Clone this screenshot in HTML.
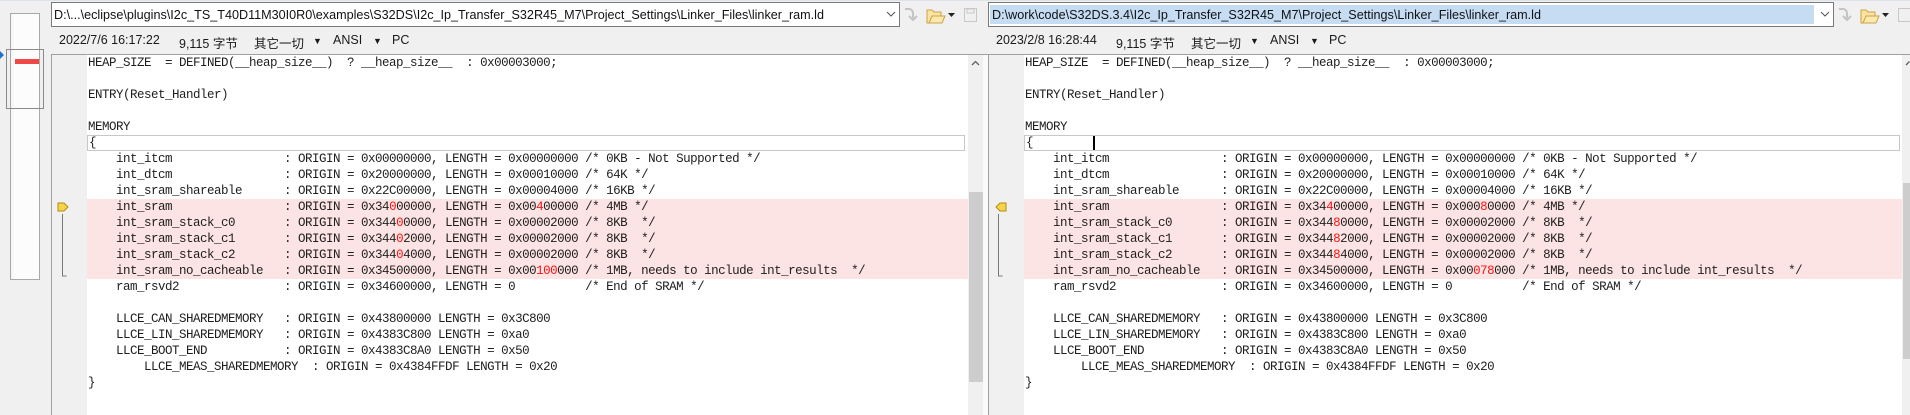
<!DOCTYPE html>
<html><head><meta charset="utf-8">
<style>
*{margin:0;padding:0;box-sizing:border-box}
body{width:1910px;height:415px;overflow:hidden;background:#f0f0f0;position:relative;font-family:"Liberation Sans","Noto Sans CJK SC",sans-serif}
.a{position:absolute}
.code{position:absolute;top:55px;background:#fff;height:360px;overflow:hidden}
.ln{position:absolute;left:0;right:0;height:16px;font:12.5px/16px "Liberation Mono",monospace;letter-spacing:-0.5px;color:#1e1e1e;white-space:pre;padding-left:1px}
.pk{background:#fde4e4}
.r{color:#ff1010}
.info{position:absolute;top:33px;font-size:12.5px;color:#1a1a1a;white-space:nowrap}
</style></head><body>

<!-- overview -->
<div class="a" style="left:10px;top:13px;width:30px;height:267px;border:1px solid #a8a8a8;background:#f7f7f7"></div>
<div class="a" style="left:14px;top:14px;width:25px;height:265px;background:#fcfcfc"></div>
<div class="a" style="left:6px;top:49px;width:38px;height:60px;border:1px solid #8a8a8a"></div>
<div class="a" style="left:15px;top:59px;width:24px;height:5px;background:#f04848"></div>
<div class="a" style="left:0;top:51px;width:0;height:0;border-top:4px solid transparent;border-bottom:4px solid transparent;border-left:4px solid #1b74d4"></div>
<div class="a" style="left:51px;top:54px;width:1px;height:361px;background:#a0a0a0"></div>

<!-- header -->
<div class="a" style="left:0;top:0;width:1910px;height:1px;background:#dfe3ea"></div>
<svg class="a" style="left:0;top:0" width="1910" height="55">
 <rect x="51.5" y="2.5" width="848" height="24" fill="#fff" stroke="#7a7a7a"/>
 <text x="54" y="19" font-family="Liberation Sans" font-size="13" fill="#111" textLength="770" lengthAdjust="spacingAndGlyphs">D:\...\eclipse\plugins\I2c_TS_T40D11M30I0R0\examples\S32DS\I2c_Ip_Transfer_S32R45_M7\Project_Settings\Linker_Files\linker_ram.ld</text>
 <path d="M887 12 l4 4 l4 -4" stroke="#555" fill="none"/>
 <path d="M905 9 h4 a4 4 0 0 1 4 4 v5 M909 16 l4 4 l4 -4" stroke="#c4c4c4" stroke-width="2" fill="none"/>
 <path d="M927 10 h5 l2 2 h7 v11 h-14z" fill="#fbe3a0" stroke="#c9a34a"/>
 <path d="M929 23 l3 -7 h13 l-3 7z" fill="#fde9ad" stroke="#c9a34a"/>
 <path d="M948 13 h7 l-3.5 4z" fill="#222"/>
 <rect x="964.5" y="8.5" width="12" height="13" fill="none" stroke="#c8c8c8"/>
 <rect x="967" y="9" width="7" height="4" fill="none" stroke="#c8c8c8"/>
 <rect x="988.5" y="2.5" width="845" height="24" fill="#fff" stroke="#7a7a7a"/>
 <rect x="990" y="5" width="824" height="19" fill="#c5dcf3"/>
 <text x="992" y="19" font-family="Liberation Sans" font-size="13" fill="#111" textLength="549" lengthAdjust="spacingAndGlyphs">D:\work\code\S32DS.3.4\I2c_Ip_Transfer_S32R45_M7\Project_Settings\Linker_Files\linker_ram.ld</text>
 <path d="M1821 12 l4 4 l4 -4" stroke="#555" fill="none"/>
 <path d="M1839 9 h4 a4 4 0 0 1 4 4 v5 M1843 16 l4 4 l4 -4" stroke="#c4c4c4" stroke-width="2" fill="none"/>
 <path d="M1861 10 h5 l2 2 h7 v11 h-14z" fill="#fbe3a0" stroke="#c9a34a"/>
 <path d="M1863 23 l3 -7 h13 l-3 7z" fill="#fde9ad" stroke="#c9a34a"/>
 <path d="M1882 13 h7 l-3.5 4z" fill="#222"/>
 <rect x="1898.5" y="8.5" width="12" height="13" fill="none" stroke="#c8c8c8"/>
 <line x1="51" y1="54.5" x2="1910" y2="54.5" stroke="#a0a0a0"/>
</svg>

<div class="info" style="left:59px">2022/7/6 16:17:22</div>
<div class="info" style="left:179px">9,115 字节</div>
<div class="info" style="left:254px">其它一切</div>
<div class="info" style="left:313px;font-size:9px;top:36px">▼</div>
<div class="info" style="left:333px">ANSI</div>
<div class="info" style="left:373px;font-size:9px;top:36px">▼</div>
<div class="info" style="left:392px">PC</div>

<div class="info" style="left:996px">2023/2/8 16:28:44</div>
<div class="info" style="left:1116px">9,115 字节</div>
<div class="info" style="left:1191px">其它一切</div>
<div class="info" style="left:1250px;font-size:9px;top:36px">▼</div>
<div class="info" style="left:1270px">ANSI</div>
<div class="info" style="left:1310px;font-size:9px;top:36px">▼</div>
<div class="info" style="left:1329px">PC</div>

<!-- left gutter -->
<svg class="a" style="left:52px;top:55px" width="35" height="360">
 <path d="M6 148 h6 l4 4 l-4 4 h-6z" fill="#f5d34a" stroke="#b58d10"/>
 <path d="M10.5 159 v62 h4" stroke="#777" fill="none"/>
</svg>

<!-- left code -->
<div class="code" style="left:87px;width:881px">
 <div class="ln" style="top:0">HEAP_SIZE  = DEFINED(__heap_size__)  ? __heap_size__  : 0x00003000;</div>
 <div class="ln" style="top:32px">ENTRY(Reset_Handler)</div>
 <div class="ln" style="top:64px">MEMORY</div>
 <div class="ln" style="top:80px;border:1px solid #c8c8c8;right:3px;line-height:14px">{</div>
 <div class="ln" style="top:96px">    int_itcm                : ORIGIN = 0x00000000, LENGTH = 0x00000000 /* 0KB - Not Supported */</div>
 <div class="ln" style="top:112px">    int_dtcm                : ORIGIN = 0x20000000, LENGTH = 0x00010000 /* 64K */</div>
 <div class="ln" style="top:128px">    int_sram_shareable      : ORIGIN = 0x22C00000, LENGTH = 0x00004000 /* 16KB */</div>
 <div class="ln pk" style="top:144px">    int_sram                : ORIGIN = 0x34<span class="r">0</span>00000, LENGTH = 0x00<span class="r">4</span>00000 /* 4MB */</div>
 <div class="ln pk" style="top:160px">    int_sram_stack_c0       : ORIGIN = 0x344<span class="r">0</span>0000, LENGTH = 0x00002000 /* 8KB  */</div>
 <div class="ln pk" style="top:176px">    int_sram_stack_c1       : ORIGIN = 0x344<span class="r">0</span>2000, LENGTH = 0x00002000 /* 8KB  */</div>
 <div class="ln pk" style="top:192px">    int_sram_stack_c2       : ORIGIN = 0x344<span class="r">0</span>4000, LENGTH = 0x00002000 /* 8KB  */</div>
 <div class="ln pk" style="top:208px">    int_sram_no_cacheable   : ORIGIN = 0x34500000, LENGTH = 0x00<span class="r">100</span>000 /* 1MB, needs to include int_results  */</div>
 <div class="ln" style="top:224px">    ram_rsvd2               : ORIGIN = 0x34600000, LENGTH = 0          /* End of SRAM */</div>
 <div class="ln" style="top:256px">    LLCE_CAN_SHAREDMEMORY   : ORIGIN = 0x43800000 LENGTH = 0x3C800</div>
 <div class="ln" style="top:272px">    LLCE_LIN_SHAREDMEMORY   : ORIGIN = 0x4383C800 LENGTH = 0xa0</div>
 <div class="ln" style="top:288px">    LLCE_BOOT_END           : ORIGIN = 0x4383C8A0 LENGTH = 0x50</div>
 <div class="ln" style="top:304px">        LLCE_MEAS_SHAREDMEMORY  : ORIGIN = 0x4384FFDF LENGTH = 0x20</div>
 <div class="ln" style="top:320px">}</div>
</div>
<!-- left scrollbar -->
<div class="a" style="left:968px;top:55px;width:15px;height:360px;background:#f0f0f0"></div>
<div class="a" style="left:969px;top:192px;width:14px;height:190px;background:#cdcdcd"></div>
<svg class="a" style="left:968px;top:58px" width="15" height="10"><path d="M4 7 l3.5 -3.5 l3.5 3.5" stroke="#606060" stroke-width="1.3" fill="none"/></svg>

<div class="a" style="left:983px;top:55px;width:5px;height:360px;background:#fafafa"></div>
<div class="a" style="left:988px;top:55px;width:1px;height:360px;background:#a0a0a0"></div>

<!-- right gutter -->
<svg class="a" style="left:989px;top:55px" width="35" height="360">
 <path d="M17 148 h-6 l-4 4 l4 4 h6z" fill="#f5d34a" stroke="#b58d10"/>
 <path d="M9.5 159 v62 h4" stroke="#777" fill="none"/>
</svg>

<!-- right code -->
<div class="code" style="left:1024px;width:878px">
 <div class="ln" style="top:0">HEAP_SIZE  = DEFINED(__heap_size__)  ? __heap_size__  : 0x00003000;</div>
 <div class="ln" style="top:32px">ENTRY(Reset_Handler)</div>
 <div class="ln" style="top:64px">MEMORY</div>
 <div class="ln" style="top:80px;border:1px solid #c8c8c8;right:2px;line-height:14px">{</div>
 <div class="a" style="left:69px;top:81px;width:2px;height:14px;background:#000"></div>
 <div class="ln" style="top:96px">    int_itcm                : ORIGIN = 0x00000000, LENGTH = 0x00000000 /* 0KB - Not Supported */</div>
 <div class="ln" style="top:112px">    int_dtcm                : ORIGIN = 0x20000000, LENGTH = 0x00010000 /* 64K */</div>
 <div class="ln" style="top:128px">    int_sram_shareable      : ORIGIN = 0x22C00000, LENGTH = 0x00004000 /* 16KB */</div>
 <div class="ln pk" style="top:144px">    int_sram                : ORIGIN = 0x34<span class="r">4</span>00000, LENGTH = 0x000<span class="r">8</span>0000 /* 4MB */</div>
 <div class="ln pk" style="top:160px">    int_sram_stack_c0       : ORIGIN = 0x344<span class="r">8</span>0000, LENGTH = 0x00002000 /* 8KB  */</div>
 <div class="ln pk" style="top:176px">    int_sram_stack_c1       : ORIGIN = 0x344<span class="r">8</span>2000, LENGTH = 0x00002000 /* 8KB  */</div>
 <div class="ln pk" style="top:192px">    int_sram_stack_c2       : ORIGIN = 0x344<span class="r">8</span>4000, LENGTH = 0x00002000 /* 8KB  */</div>
 <div class="ln pk" style="top:208px">    int_sram_no_cacheable   : ORIGIN = 0x34500000, LENGTH = 0x00<span class="r">078</span>000 /* 1MB, needs to include int_results  */</div>
 <div class="ln" style="top:224px">    ram_rsvd2               : ORIGIN = 0x34600000, LENGTH = 0          /* End of SRAM */</div>
 <div class="ln" style="top:256px">    LLCE_CAN_SHAREDMEMORY   : ORIGIN = 0x43800000 LENGTH = 0x3C800</div>
 <div class="ln" style="top:272px">    LLCE_LIN_SHAREDMEMORY   : ORIGIN = 0x4383C800 LENGTH = 0xa0</div>
 <div class="ln" style="top:288px">    LLCE_BOOT_END           : ORIGIN = 0x4383C8A0 LENGTH = 0x50</div>
 <div class="ln" style="top:304px">        LLCE_MEAS_SHAREDMEMORY  : ORIGIN = 0x4384FFDF LENGTH = 0x20</div>
 <div class="ln" style="top:320px">}</div>
</div>
<!-- right scrollbar -->
<div class="a" style="left:1902px;top:55px;width:8px;height:360px;background:#f0f0f0"></div>
<div class="a" style="left:1903px;top:183px;width:7px;height:176px;background:#cdcdcd"></div>
<svg class="a" style="left:1902px;top:58px" width="8" height="10"><path d="M4 7 l3.5 -3.5" stroke="#606060" stroke-width="1.3" fill="none"/></svg>
</body></html>
